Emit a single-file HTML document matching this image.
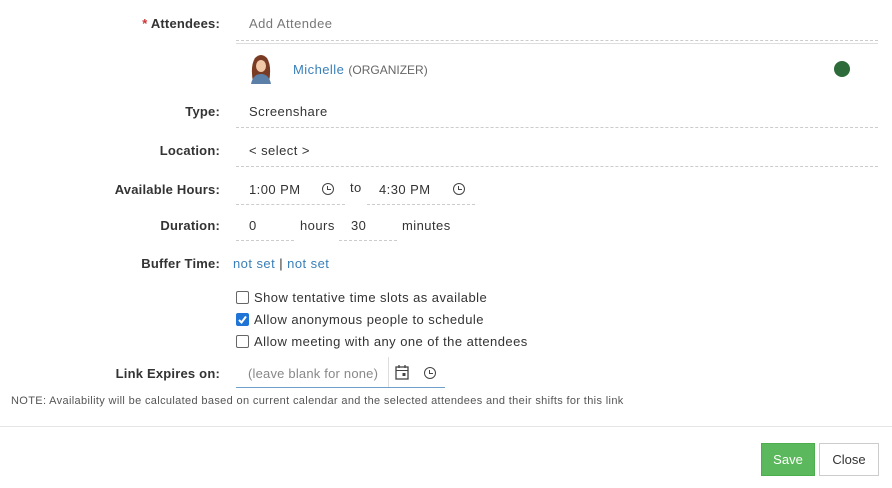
<!DOCTYPE html><html><head><style>
body{margin:0;width:892px;height:488px;background:#fff;font-family:"Liberation Sans",sans-serif;font-size:13px;color:#333;position:relative;overflow:hidden;letter-spacing:.45px}
.a{position:absolute;white-space:nowrap}
.l{font-weight:bold;text-align:right;right:672px;letter-spacing:.2px}
.d{position:absolute;border-top:1px dashed #ccc;height:0}
.blue{color:#3a7fb8}
.cb{position:absolute;width:11px;height:11px;border:1px solid #666;border-radius:2px;left:236px}
.clk{position:absolute;width:10px;height:10px;border:1.3px solid #444;border-radius:50%}
.clk:after{content:"";position:absolute;left:4px;top:2px;width:3px;height:3px;border-left:1.2px solid #444;border-bottom:1.2px solid #444}
</style></head><body>
<div class="a l" style="top:16px"><span style="color:#c33">*</span> Attendees:</div>
<div class="a" style="left:249px;top:16px;color:#777">Add Attendee</div>
<div class="d" style="left:236px;width:642px;top:40px"></div>
<div class="a" style="left:236px;top:43px;width:642px;border-top:1px solid #ddd"></div>
<svg class="a" style="left:247px;top:52px" width="28" height="32"><path d="M6 30 Q3 14 8 6 Q14 0 20 6 Q25 14 22 30Z" fill="#7a3b24"/><ellipse cx="14" cy="14" rx="5" ry="6" fill="#f0c8a8"/><path d="M4 32 Q6 22 14 22 Q22 22 24 32Z" fill="#5b7fa6"/></svg>
<div class="a" style="left:293px;top:62px"><span class="blue">Michelle</span> <span style="color:#666;font-size:12px;letter-spacing:0">(ORGANIZER)</span></div>
<div class="a" style="left:834px;top:61px;width:16px;height:16px;border-radius:50%;background:#2e6b3a"></div>
<div class="a l" style="top:104px">Type:</div>
<div class="a" style="left:249px;top:104px">Screenshare</div>
<div class="d" style="left:236px;width:642px;top:127px"></div>
<div class="a l" style="top:143px">Location:</div>
<div class="a" style="left:249px;top:143px">&lt; select &gt;</div>
<div class="d" style="left:236px;width:642px;top:166px"></div>
<div class="a l" style="top:182px">Available Hours:</div>
<div class="a" style="left:249px;top:182px">1:00 PM</div>
<div class="clk" style="left:322px;top:183px"></div>
<div class="a" style="left:350px;top:180px">to</div>
<div class="a" style="left:379px;top:182px">4:30 PM</div>
<div class="clk" style="left:453px;top:183px"></div>
<div class="d" style="left:236px;width:109px;top:204px"></div>
<div class="d" style="left:367px;width:108px;top:204px"></div>
<div class="a l" style="top:218px">Duration:</div>
<div class="a" style="left:249px;top:218px">0</div>
<div class="a" style="left:300px;top:218px">hours</div>
<div class="a" style="left:351px;top:218px">30</div>
<div class="a" style="left:402px;top:218px">minutes</div>
<div class="d" style="left:236px;width:58px;top:240px"></div>
<div class="d" style="left:339px;width:58px;top:240px"></div>
<div class="a l" style="top:256px">Buffer Time:</div>
<div class="a" style="left:233px;top:256px"><span class="blue">not set</span> | <span class="blue">not set</span></div>
<div class="cb" style="top:291px"></div><div class="a" style="left:254px;top:290px">Show tentative time slots as available</div>
<div class="cb" style="top:313px;background:#1f74d6;border-color:#1f74d6"><svg width="11" height="11" style="position:absolute"><path d="M2 6 L4.5 8.5 L9 2.5" stroke="#fff" stroke-width="2" fill="none"/></svg></div><div class="a" style="left:254px;top:312px">Allow anonymous people to schedule</div>
<div class="cb" style="top:335px"></div><div class="a" style="left:254px;top:334px">Allow meeting with any one of the attendees</div>
<div class="a l" style="top:366px">Link Expires on:</div>
<div class="a" style="left:248px;top:366px;color:#888;letter-spacing:.2px">(leave blank for none)</div>
<div class="a" style="left:388px;top:357px;height:31px;border-left:1px solid #ddd"></div>
<svg class="a" style="left:395px;top:364px" width="14" height="16"><rect x="1" y="3" width="12" height="12" fill="none" stroke="#444" stroke-width="1.3"/><line x1="1" y1="6.5" x2="13" y2="6.5" stroke="#444"/><line x1="4" y1="1" x2="4" y2="4" stroke="#444" stroke-width="1.3"/><line x1="10" y1="1" x2="10" y2="4" stroke="#444" stroke-width="1.3"/><rect x="7.5" y="9" width="3" height="3" fill="#444"/></svg>
<div class="clk" style="left:424px;top:367px"></div>
<div class="a" style="left:236px;top:387px;width:209px;border-top:1px solid #6fa0cc"></div>
<div class="a" style="left:11px;top:395px;font-size:11px;color:#555;letter-spacing:.35px">NOTE: Availability will be calculated based on current calendar and the selected attendees and their shifts for this link</div>
<div class="a" style="left:0;top:426px;width:892px;border-top:1px solid #e5e5e5"></div>
<div class="a" style="left:761px;top:443px;width:54px;height:33px;background:#5cb85c;border:1px solid #4cae4c;box-sizing:border-box;color:#fff;text-align:center;line-height:31px;letter-spacing:0">Save</div>
<div class="a" style="left:819px;top:443px;width:60px;height:33px;background:#fff;border:1px solid #ccc;box-sizing:border-box;text-align:center;line-height:31px;letter-spacing:0">Close</div>
</body></html>
